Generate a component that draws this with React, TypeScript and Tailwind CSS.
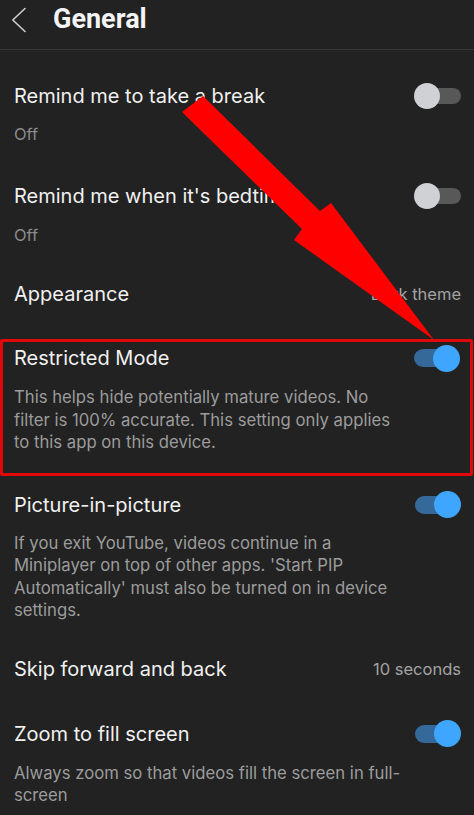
import React from "react";

function Toggle({ on }: { on: boolean }) {
  if (on) {
    return (
      <div className="relative w-[47px] h-[27px] shrink-0">
        <div className="absolute left-[1px] top-[4.5px] w-[36px] h-[18px] rounded-full bg-[#34699a]" />
        <div className="absolute right-0 top-0 w-[27px] h-[27px] rounded-full bg-[#3ea6ff]" />
      </div>
    );
  }
  return (
    <div className="relative w-[47px] h-[26px] shrink-0">
      <div className="absolute right-0 top-[5px] w-[42px] h-[16px] rounded-full bg-[#585858]" />
      <div className="absolute left-0 top-0 w-[26px] h-[26px] rounded-full bg-[#d0d1d5]" />
    </div>
  );
}

const title = "text-[20px] leading-[28px] text-[#f1f1f1]";
const desc = "text-[16.7px] leading-[22.5px] text-[#9c9c9c]";

export default function App() {
  return (
    <div
      className="relative w-[474px] h-[815px] overflow-hidden bg-[#222222]"
      style={{ fontFamily: "Inter, 'Noto Sans', sans-serif" }}
    >
      {/* Header */}
      <div className="h-[50px] border-b border-[#383838] flex items-start">
        <svg width="16" height="26" viewBox="0 0 16 26" className="ml-[11px] mt-[7px]">
          <polyline points="14,1.5 1.8,13 14,24.5" fill="none" stroke="#cfcfcf" strokeWidth="1.6" strokeLinecap="round" strokeLinejoin="round" />
        </svg>
        <div
          className="ml-[26px] mt-[3px] text-[27px] leading-[32px] font-bold text-[#f4f4f4]"
          style={{ fontFamily: "Roboto, 'Liberation Sans', sans-serif" }}
        >
          General
        </div>
      </div>

      {/* Remind break */}
      <div className="pl-[14px] pr-[13px] pt-[32px]">
        <div className="flex items-center justify-between">
          <div className={title}>Remind me to take a break</div>
          <Toggle on={false} />
        </div>
        <div className="mt-[13px] text-[16.5px] leading-[22px] text-[#8c8c8c]">Off</div>
      </div>

      {/* Remind bedtime */}
      <div className="pl-[14px] pr-[13px] pt-[37px]">
        <div className="flex items-center justify-between">
          <div className={title}>Remind me when it's bedtime</div>
          <Toggle on={false} />
        </div>
        <div className="mt-[14px] text-[16.5px] leading-[22px] text-[#8c8c8c]">Off</div>
      </div>

      {/* Appearance */}
      <div className="pl-[14px] pr-[13px] pt-[34px]">
        <div className="flex items-center justify-between">
          <div className={title}>Appearance</div>
          <div className="text-[16.5px] leading-[22px] text-[#a3a3a3]">Dark theme</div>
        </div>
      </div>

      {/* Restricted Mode (highlighted) */}
      <div className="mt-[31px] w-[473px] border-[3px] border-[#e0080a] rounded-[2px] pl-[11px] pr-[10px] pt-[2px] pb-[19px]">
        <div className="flex items-center justify-between">
          <div className={title}>Restricted Mode</div>
          <Toggle on={true} />
        </div>
        <div className={`mt-[14px] ${desc}`}>
          This helps hide potentially mature videos. No
          <br />
          filter is 100% accurate. This setting only applies
          <br />
          to this app on this device.
        </div>
      </div>

      {/* Picture-in-picture */}
      <div className="pl-[14px] pr-[13px] pt-[15px]">
        <div className="flex items-center justify-between">
          <div className={title}>Picture-in-picture</div>
          <Toggle on={true} />
        </div>
        <div className={`mt-[13px] ${desc}`}>
          If you exit YouTube, videos continue in a
          <br />
          Miniplayer on top of other apps. 'Start PIP
          <br />
          Automatically' must also be turned on in device
          <br />
          settings.
        </div>
      </div>

      {/* Skip */}
      <div className="pl-[14px] pr-[13px] pt-[33px]">
        <div className="flex items-center justify-between">
          <div className={title}>Skip forward and back</div>
          <div className="text-[16.5px] leading-[22px] text-[#a3a3a3]">10 seconds</div>
        </div>
      </div>

      {/* Zoom to fill */}
      <div className="pl-[14px] pr-[13px] pt-[37px]">
        <div className="flex items-center justify-between">
          <div className={title}>Zoom to fill screen</div>
          <Toggle on={true} />
        </div>
        <div className={`mt-[14px] ${desc}`}>
          Always zoom so that videos fill the screen in full-
          <br />
          screen
        </div>
      </div>

      {/* Red annotation arrow */}
      <svg
        className="absolute left-0 top-0 pointer-events-none"
        width="474"
        height="815"
        viewBox="0 0 474 815"
      >
        <polygon
          points="182,112 203,96 320,211 331,203 434,340 294,240 302,229"
          fill="#ff0000"
        />
      </svg>
    </div>
  );
}
